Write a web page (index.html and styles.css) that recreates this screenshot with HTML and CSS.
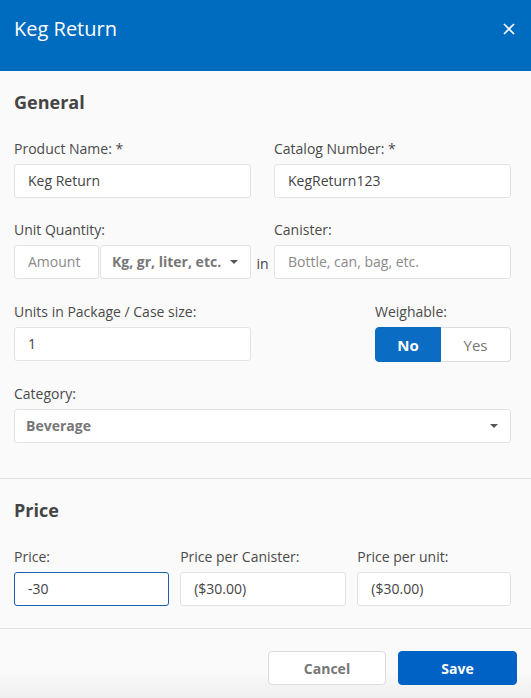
FILE: index.html
```html
<!DOCTYPE html>
<html lang="en">
<head>
<meta charset="utf-8">
<title>Keg Return</title>
<link rel="stylesheet" href="styles.css">
</head>
<body>
<div class="modal">
  <header class="modal-header">
    <h1 class="modal-title">Keg Return</h1>
    <button class="close-btn" type="button" aria-label="Close">
      <svg width="12" height="12" viewBox="0 0 12 12"><path d="M1 1 L11 11 M11 1 L1 11" stroke="#fff" stroke-width="1.7" fill="none"/></svg>
    </button>
  </header>

  <section class="section section-general">
    <h2 class="section-title">General</h2>

    <div class="row two-col">
      <div class="field">
        <label class="label">Product Name: *</label>
        <div class="input">Keg Return</div>
      </div>
      <div class="field">
        <label class="label">Catalog Number: *</label>
        <div class="input">KegReturn123</div>
      </div>
    </div>

    <div class="row unit-row">
      <div class="field">
        <label class="label">Unit Quantity:</label>
        <div class="combo">
          <div class="input amount placeholder">Amount</div>
          <div class="input select combo-select"><span>Kg, gr, liter, etc.</span><svg class="caret" width="8" height="4" viewBox="0 0 8 4"><path d="M0 0 H8 L4 4 Z" fill="#555"/></svg></div>
        </div>
      </div>
      <div class="in-text">in</div>
      <div class="field">
        <label class="label">Canister:</label>
        <div class="input placeholder">Bottle, can, bag, etc.</div>
      </div>
    </div>

    <div class="row two-col">
      <div class="field">
        <label class="label">Units in Package / Case size:</label>
        <div class="input">1</div>
      </div>
      <div class="field field-end">
        <label class="label">Weighable:</label>
        <div class="toggle">
          <button class="toggle-btn active" type="button">No</button>
          <button class="toggle-btn" type="button">Yes</button>
        </div>
      </div>
    </div>

    <div class="row">
      <div class="field">
        <label class="label">Category:</label>
        <div class="input select"><span>Beverage</span><svg class="caret" width="8" height="4" viewBox="0 0 8 4"><path d="M0 0 H8 L4 4 Z" fill="#555"/></svg></div>
      </div>
    </div>
  </section>

  <section class="section section-price">
    <h2 class="section-title">Price</h2>
    <div class="row three-col">
      <div class="field">
        <label class="label">Price:</label>
        <div class="input focused">-30</div>
      </div>
      <div class="field">
        <label class="label">Price per Canister:</label>
        <div class="input">($30.00)</div>
      </div>
      <div class="field">
        <label class="label">Price per unit:</label>
        <div class="input">($30.00)</div>
      </div>
    </div>
  </section>

  <footer class="modal-footer">
    <button class="btn btn-cancel" type="button">Cancel</button>
    <button class="btn btn-save" type="button">Save</button>
  </footer>
</div>
</body>
</html>
```

FILE: styles.css
```css
* { box-sizing: border-box; }

html, body {
  margin: 0;
  padding: 0;
  height: 100%;
}

body {
  background: #fafafa;
  font-family: "Open Sans", "Liberation Sans", sans-serif;
  color: #444;
}

.modal {
  display: flex;
  flex-direction: column;
  min-height: 100%;
}

.modal-header {
  height: 71px;
  background: #006cbf;
  padding: 15px 16px 0 14px;
  display: flex;
  justify-content: space-between;
  align-items: flex-start;
}

.modal-title {
  margin: 0;
  font-size: 20px;
  font-weight: 400;
  line-height: 28px;
  color: #fff;
}

.close-btn {
  height: 28px;
  width: 12px;
  padding: 0;
  margin: 0;
  border: none;
  background: transparent;
  display: flex;
  align-items: center;
  justify-content: center;
}

.close-btn svg { display: block; }

.section {
  padding: 19px 20px 0 14px;
}

.section-general {
  padding-bottom: 13px;
}

.section-price {
  border-top: 1px solid #e2e2e2;
  padding-bottom: 0;
}

.section-title {
  margin: 0 0 25px;
  font-size: 18px;
  line-height: 24px;
  font-weight: 700;
  color: #444;
}

.row {
  margin-bottom: 22px;
}

.two-col {
  display: grid;
  grid-template-columns: 1fr 1fr;
  column-gap: 23px;
  align-items: start;
}

.unit-row {
  display: grid;
  grid-template-columns: 1fr 23px 1fr;
  align-items: end;
  margin-bottom: 23px;
}

.three-col {
  display: grid;
  grid-template-columns: 155fr 166fr 154fr;
  column-gap: 11.5px;
}

.field {
  display: flex;
  flex-direction: column;
  min-width: 0;
}

.field-end {
  justify-self: end;
  width: 136px;
}

.label {
  font-size: 14px;
  line-height: 20px;
  color: #4a4a4a;
  margin-bottom: 5px;
}

.input {
  height: 34px;
  background: #fff;
  border: 1px solid #e3e3e3;
  border-radius: 3px;
  padding: 0 13px;
  font-size: 14px;
  line-height: 32px;
  color: #444;
  white-space: nowrap;
  overflow: hidden;
}

.placeholder {
  color: #8a8a8a;
}

.focused {
  border-color: #1b5fb0;
}

.combo {
  display: flex;
}

.amount {
  flex: 0 0 85px;
}

.select {
  display: flex;
  align-items: center;
  justify-content: space-between;
  padding: 0 12px 0 11px;
  font-weight: 700;
  color: #777;
}

.combo-select {
  flex: 1 1 auto;
  margin-left: 1px;
}

.caret {
  display: block;
  flex: 0 0 auto;
}

.in-text {
  font-size: 14px;
  line-height: 20px;
  color: #444;
  text-align: center;
  margin-bottom: 5px;
}

.toggle {
  display: flex;
  height: 35px;
}

.toggle-btn {
  font-family: inherit;
  font-size: 15px;
  margin: 0;
  padding: 0;
  cursor: pointer;
}

.toggle-btn:first-child {
  flex: 0 0 66px;
  border-radius: 4px 0 0 4px;
}

.toggle-btn:last-child {
  flex: 1 1 auto;
  background: #fff;
  border: 1px solid #dcdcdc;
  border-left: none;
  border-radius: 0 4px 4px 0;
  color: #777;
}

.toggle-btn.active {
  background: #0a6cc2;
  border: 1px solid #0a6cc2;
  color: #fff;
  font-weight: 700;
}

.modal-footer {
  flex: 1 0 auto;
  margin-top: 0;
  border-top: 1px solid #e2e2e2;
  padding: 22px 14px 13px;
  display: flex;
  justify-content: flex-end;
  align-items: flex-start;
  gap: 12px;
  background: linear-gradient(to bottom, #fafafa 0, #fafafa 41px, #efefef 100%);
}

.btn {
  height: 34px;
  border-radius: 4px;
  font-family: inherit;
  font-size: 14px;
  font-weight: 700;
  padding: 0;
  cursor: pointer;
}

.btn-cancel {
  width: 118px;
  background: #fff;
  border: 1px solid #dcdcdc;
  color: #777;
}

.btn-save {
  width: 119px;
  background: #0062c4;
  border: 1px solid #0062c4;
  color: #fff;
}
```
